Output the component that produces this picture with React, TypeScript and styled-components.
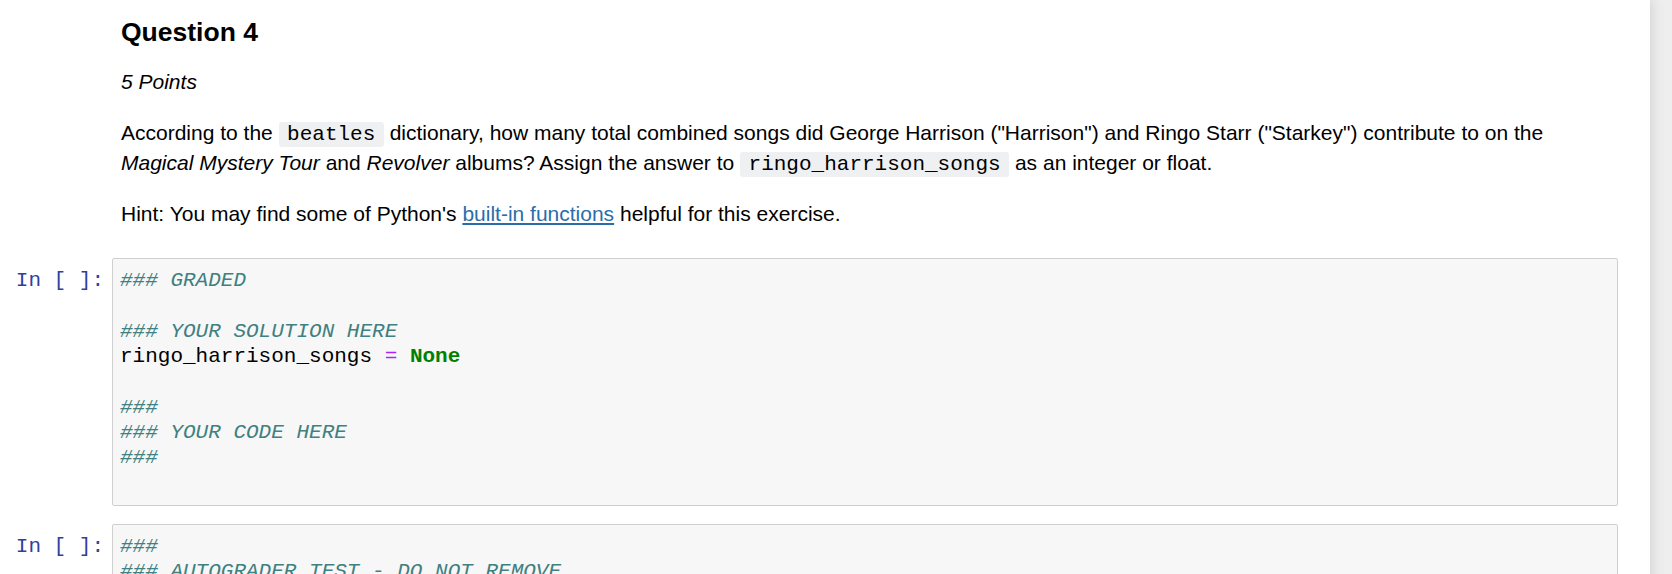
import styled, {createGlobalStyle} from "styled-components";

const GlobalStyle = createGlobalStyle`
  html, body {
    margin: 0;
    padding: 0;
    background-color: #eeeeee;
    overflow: hidden;
  }
`;

const Page = styled.div`
  width: 1650px;
  min-height: 574px;
  box-sizing: border-box;
  padding-top: 16px;
  background-color: #ffffff;
  box-shadow: 0 0 12px 1px rgba(87, 87, 87, 0.2);
  font-family: "Liberation Sans", Arial, sans-serif;
  color: #000000;
`;

const Cell = styled.div<{ $after?: number }>`
  display: grid;
  grid-template-columns: 112px 1506px;
  margin-bottom: ${p => p.$after ?? 0}px;
`;

const Prompt = styled.div`
  box-sizing: border-box;
  padding: 10px 8px 0 0;
  text-align: right;
  font-family: "Liberation Mono", "Courier New", monospace;
  font-size: 21px;
  line-height: 25.33px;
  color: #303f9f;
  white-space: pre;
`;

const MarkdownArea = styled.div`
  padding: 0 10px 29px 9px;
`;

const Heading = styled.h2`
  margin: 0 0 19px;
  font-size: 26.5px;
  line-height: 32px;
  font-weight: bold;
`;

const Para = styled.p`
  margin: 0 0 21px;
  font-size: 21px;
  line-height: 30px;

  &:last-child {
    margin-bottom: 0;
  }
`;

const InlineCode = styled.code`
  padding: 1px 8.5px;
  border-radius: 3px;
  background-color: #eff0f1;
  font-family: "Liberation Mono", "Courier New", monospace;
  font-size: 21px;
  line-height: 1;
`;

const Link = styled.a`
  color: #296eaa;
  text-decoration: underline;
`;

const InputArea = styled.div`
  border: 1px solid #cfcfcf;
  border-radius: 2px;
  background-color: #f7f7f7;
  padding: 9px 7px;
  font-family: "Liberation Mono", "Courier New", monospace;
  font-size: 21px;
`;

const CodeLine = styled.div`
  height: 25.33px;
  line-height: 25.33px;
  white-space: pre;
`;

const Comment = styled.span`
  color: #408080;
  font-style: italic;
`;

const Operator = styled.span`
  color: #aa22ff;
`;

const Keyword = styled.span`
  color: #008000;
  font-weight: bold;
`;

const App = () => {
    return (
        <>
            <GlobalStyle/>
            <Page>
                <Cell>
                    <div/>
                    <MarkdownArea>
                        <Heading>Question 4</Heading>
                        <Para><em>5 Points</em></Para>
                        <Para>
                            According to the <InlineCode>beatles</InlineCode> dictionary, how many total combined
                            songs did George Harrison ("Harrison") and Ringo Starr ("Starkey") contribute to on
                            the <em>Magical Mystery Tour</em> and <em>Revolver</em> albums? Assign the answer
                            to <InlineCode>ringo_harrison_songs</InlineCode> as an integer or float.
                        </Para>
                        <Para>
                            Hint: You may find some of Python's <Link href="#">built-in functions</Link> helpful
                            for this exercise.
                        </Para>
                    </MarkdownArea>
                </Cell>

                <Cell $after={18}>
                    <Prompt>In [ ]:</Prompt>
                    <InputArea>
                        <CodeLine><Comment>### GRADED</Comment></CodeLine>
                        <CodeLine>{" "}</CodeLine>
                        <CodeLine><Comment>### YOUR SOLUTION HERE</Comment></CodeLine>
                        <CodeLine>ringo_harrison_songs <Operator>=</Operator> <Keyword>None</Keyword></CodeLine>
                        <CodeLine>{" "}</CodeLine>
                        <CodeLine><Comment>###</Comment></CodeLine>
                        <CodeLine><Comment>### YOUR CODE HERE</Comment></CodeLine>
                        <CodeLine><Comment>###</Comment></CodeLine>
                        <CodeLine>{" "}</CodeLine>
                    </InputArea>
                </Cell>

                <Cell>
                    <Prompt>In [ ]:</Prompt>
                    <InputArea>
                        <CodeLine><Comment>###</Comment></CodeLine>
                        <CodeLine><Comment>### AUTOGRADER TEST - DO NOT REMOVE</Comment></CodeLine>
                        <CodeLine><Comment>###</Comment></CodeLine>
                    </InputArea>
                </Cell>
            </Page>
        </>
    );
};

export default App;
